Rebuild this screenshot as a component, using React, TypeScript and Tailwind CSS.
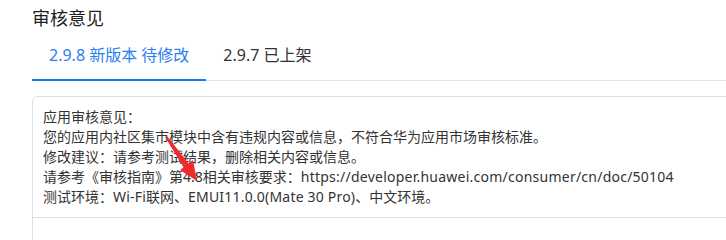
import React from "react";

const tabs = [
  { label: "2.9.8 新版本 待修改", active: true },
  { label: "2.9.7 已上架", active: false },
];

export default function App() {
  return (
    <div
      className="relative w-[726px] h-[240px] overflow-hidden bg-white text-[#333]"
      style={{ fontFamily: '"Noto Sans", "Noto Sans CJK SC", sans-serif' }}
    >
      <div className="pl-8">
        {/* Title */}
        <h2 className="pt-[4px] text-[18px] leading-[28px] text-[#1f1f1f]">审核意见</h2>

        {/* Tabs */}
        <div className="flex border-b border-[#e3e3e3]">
          {tabs.map((tab) => (
            <div
              key={tab.label}
              className={`relative px-[17px] pt-[11px] pb-[13px] text-[16px] leading-[24px] whitespace-pre ${
                tab.active ? "text-[#2a7ef0]" : "text-[#333]"
              }`}
            >
              {tab.label}
              {tab.active && (
                <span className="absolute left-0 right-0 bottom-[-1px] h-[2px] bg-[#1677ff]" />
              )}
            </div>
          ))}
        </div>

        {/* Review card */}
        <div className="mt-[15px] w-[760px] rounded-t-md border border-[#dcdfe6]">
          <div className="border-b border-[#dcdfe6] pt-[10px] pb-[10px] pl-[10px] text-[14px] leading-[20px] whitespace-nowrap">
            <div>应用审核意见：</div>
            <div>您的应用内社区集市模块中含有违规内容或信息，不符合华为应用市场审核标准。</div>
            <div>修改建议：请参考测试结果，删除相关内容或信息。</div>
            <div>
              请参考《审核指南》第4.8相关审核要求：
              <span className="tracking-[0.24px]">https://developer.huawei.com/consumer/cn/doc/50104</span>
            </div>
            <div>
              测试环境：<span className="tracking-[0.2px]">Wi-Fi</span>联网、
              <span className="tracking-[0.2px]">EMUI11.0.0(Mate 30 Pro)</span>、中文环境。
            </div>
          </div>
          <div className="h-[40px]" />
        </div>
      </div>

      {/* Red annotation arrow */}
      <svg className="absolute left-0 top-0 pointer-events-none" width="726" height="240">
        <polygon points="165,137 167,136 189,164 184,168" fill="#ef2b2b" />
        <polygon points="197,181 180,170 193,160" fill="#ef2b2b" />
      </svg>
    </div>
  );
}
